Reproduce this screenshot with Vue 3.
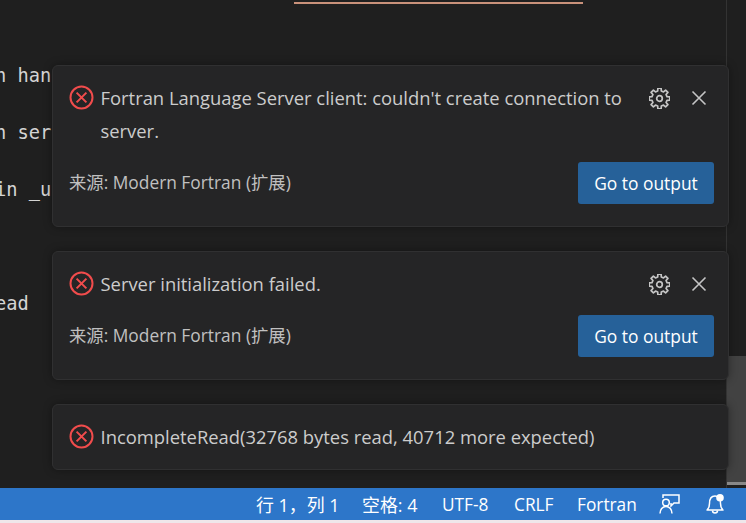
<script setup>
import { computed } from 'vue'

const cards = [
  { id: 1, lines: ['Fortran Language Server client: couldn\'t create connection to', 'server.'], source: '来源: Modern Fortran (扩展)', action: 'Go to output' },
  { id: 2, lines: ['Server initialization failed.'], source: '来源: Modern Fortran (扩展)', action: 'Go to output' },
  { id: 3, lines: ['IncompleteRead(32768 bytes read, 40712 more expected)'] }
]
const code = ['', '', 'n han', '', 'n ser', '', 'in _u', '', '', '', 'ead']
const statusItems = [
  { text: '行 1，列 1', w: 106, cjk: true },
  { text: '空格: 4', w: 80, cjk: true },
  { text: 'UTF-8', w: 72 },
  { text: 'CRLF', w: 63 },
  { text: 'Fortran', w: 82 }
]

const gearPath = computed(() => {
  const c = 10.5, teeth = 8, ro = 10.4, ri = 7.7
  const pts = []
  for (let i = 0; i < teeth; i++) {
    const a = (i * 2 * Math.PI) / teeth - Math.PI / 2
    const w = Math.PI / teeth
    const list = [[ri, a - w * 0.6], [ro, a - w * 0.4], [ro, a + w * 0.4], [ri, a + w * 0.6]]
    for (const [r, t] of list) pts.push(`${(c + r * Math.cos(t)).toFixed(2)} ${(c + r * Math.sin(t)).toFixed(2)}`)
  }
  return 'M' + pts.join('L') + 'Z'
})
</script>

<template>
  <div class="window">
    <div class="editor">
      <div class="code-area">
        <div class="accent"></div>
        <div class="code">
          <div v-for="(line, i) in code" :key="i" class="code-line">{{ line }}</div>
        </div>
      </div>
      <div class="overview">
        <div class="thumb"></div>
        <div class="thumb-line"></div>
      </div>
      <div class="stack">
        <div v-for="card in cards" :key="card.id" class="card">
          <div class="head">
            <svg class="err" width="25" height="25" viewBox="0 0 25 25">
              <circle cx="12.5" cy="12.5" r="11" fill="none" stroke="#f14c4c" stroke-width="2" />
              <path d="M7.6 7.6l9.8 9.8M17.4 7.6l-9.8 9.800" stroke="#f14c4c" stroke-width="2" fill="none" />
            </svg>
            <div class="msg">
              <div v-for="l in card.lines" :key="l">{{ l }}</div>
            </div>
            <div v-if="card.action" class="tools">
              <svg width="21" height="21" viewBox="0 0 21 21">
                <path :d="gearPath" fill="none" stroke="#c5c5c5" stroke-width="1.7" stroke-linejoin="round" />
                <circle cx="10.5" cy="10.5" r="2.8" fill="none" stroke="#c5c5c5" stroke-width="1.7" />
              </svg>
              <svg width="16" height="16" viewBox="0 0 16 16">
                <path d="M1.500 1.500l13 13M14.500 1.500l-13 13" stroke="#c5c5c5" stroke-width="1.6" fill="none" />
              </svg>
            </div>
          </div>
          <div v-if="card.action" class="foot">
            <span class="source">{{ card.source }}</span>
            <button class="btn">{{ card.action }}</button>
          </div>
        </div>
      </div>
    </div>
    <div class="status">
      <span
        v-for="s in statusItems"
        :key="s.text"
        class="item"
        :class="{ cjk: s.cjk }"
        :style="{ width: s.w + 'px' }"
      >{{ s.text }}</span>
      <svg class="sicon feedback" width="22" height="22" viewBox="0 0 22 22">
        <path d="M4 5V2h16v8h-5l-3 3v-3" fill="none" stroke="#fff" stroke-width="1.5" />
        <circle cx="7" cy="9.500" r="3.300" fill="#2d76c9" stroke="#fff" stroke-width="1.5" />
        <path d="M1 20.500c0-4 2.500-7 6-7s6 3 6 7" fill="none" stroke="#fff" stroke-width="1.5" />
      </svg>
      <svg class="sicon" width="22" height="22" viewBox="0 0 22 22">
        <path d="M2 17c2-1.500 2.500-3 2.500-6.500C4.500 6 6.500 3 10 3s5.500 3 5.500 7.500c0 3.500.5 5 2.500 6.500z" fill="none" stroke="#fff" stroke-width="1.5" stroke-linejoin="round" />
        <path d="M7.500 17.500a2.500 2.500 0 0 0 5 0" fill="none" stroke="#fff" stroke-width="1.5" />
        <circle cx="15" cy="4.700" r="3.800" fill="#fff" />
      </svg>
    </div>
    <div class="strip"></div>
  </div>
</template>

<style scoped>
.window {
  width: 746px;
  height: 523px;
  display: flex;
  flex-direction: column;
  overflow: hidden;
  background: #1f1f1f;
  font-family: "Open Sans", "Noto Sans CJK SC", sans-serif;
}
.editor {
  position: relative;
  height: 488px;
  display: flex;
}
.code-area {
  width: 726px;
  border-right: 1px solid #333;
  overflow: hidden;
}
.accent {
  width: 289px;
  height: 2px;
  margin: 2px 0 0 294px;
  background: #c9917a;
}
.code {
  margin: 1px 0 0 -5px;
  font-family: "DejaVu Sans Mono", monospace;
  font-size: 18.700px;
  line-height: 28.500px;
  color: #d4d4d4;
  white-space: pre;
}
.code-line {
  height: 28.500px;
}
.overview {
  flex: 1;
  padding-top: 356px;
}
.thumb {
  height: 126px;
  background: #424242;
}
.thumb-line {
  height: 3px;
  background: #888;
}
.stack {
  position: absolute;
  left: 52px;
  bottom: 18px;
  width: 677px;
  display: flex;
  flex-direction: column;
  gap: 24px;
}
.card {
  box-sizing: border-box;
  padding: 16px 14px 22px 16px;
  background: #252526;
  border: 1px solid #303031;
  border-radius: 6px;
  box-shadow: 0 0 8px rgba(0, 0, 0, 0.36);
  color: #cccccc;
}
.card:last-child {
  padding-bottom: 15px;
}
.head {
  display: flex;
  align-items: flex-start;
  font-size: 18.400px;
  line-height: 33px;
}
.err {
  flex: none;
  margin: 3px 6.500px 0 0;
}
.msg {
  flex: 1;
  margin-top: -1px;
  padding-bottom: 1px;
  white-space: nowrap;
}
.tools {
  display: flex;
  align-items: center;
  gap: 21px;
  height: 32px;
  margin-right: 7px;
}
.foot {
  display: flex;
  justify-content: space-between;
  align-items: center;
  margin-top: 14px;
}
.source {
  padding-bottom: 4px;
  font-size: 17.350px;
  color: #c0c0c0;
}
.btn {
  width: 136px;
  height: 42px;
  padding: 0;
  border: none;
  border-radius: 3px;
  background: #266199;
  color: #fff;
  font: inherit;
  font-size: 17.400px;
}
.status {
  height: 32px;
  display: flex;
  align-items: center;
  padding-left: 256px;
  background: #2d76c9;
  color: #fff;
  font-size: 17.300px;
}
.item {
  flex: none;
  white-space: nowrap;
}
.cjk {
  font-size: 17.900px;
}
.sicon {
  flex: none;
  margin-right: 24px;
}
.strip {
  flex: 1;
  background: #efe6ea;
}
</style>
